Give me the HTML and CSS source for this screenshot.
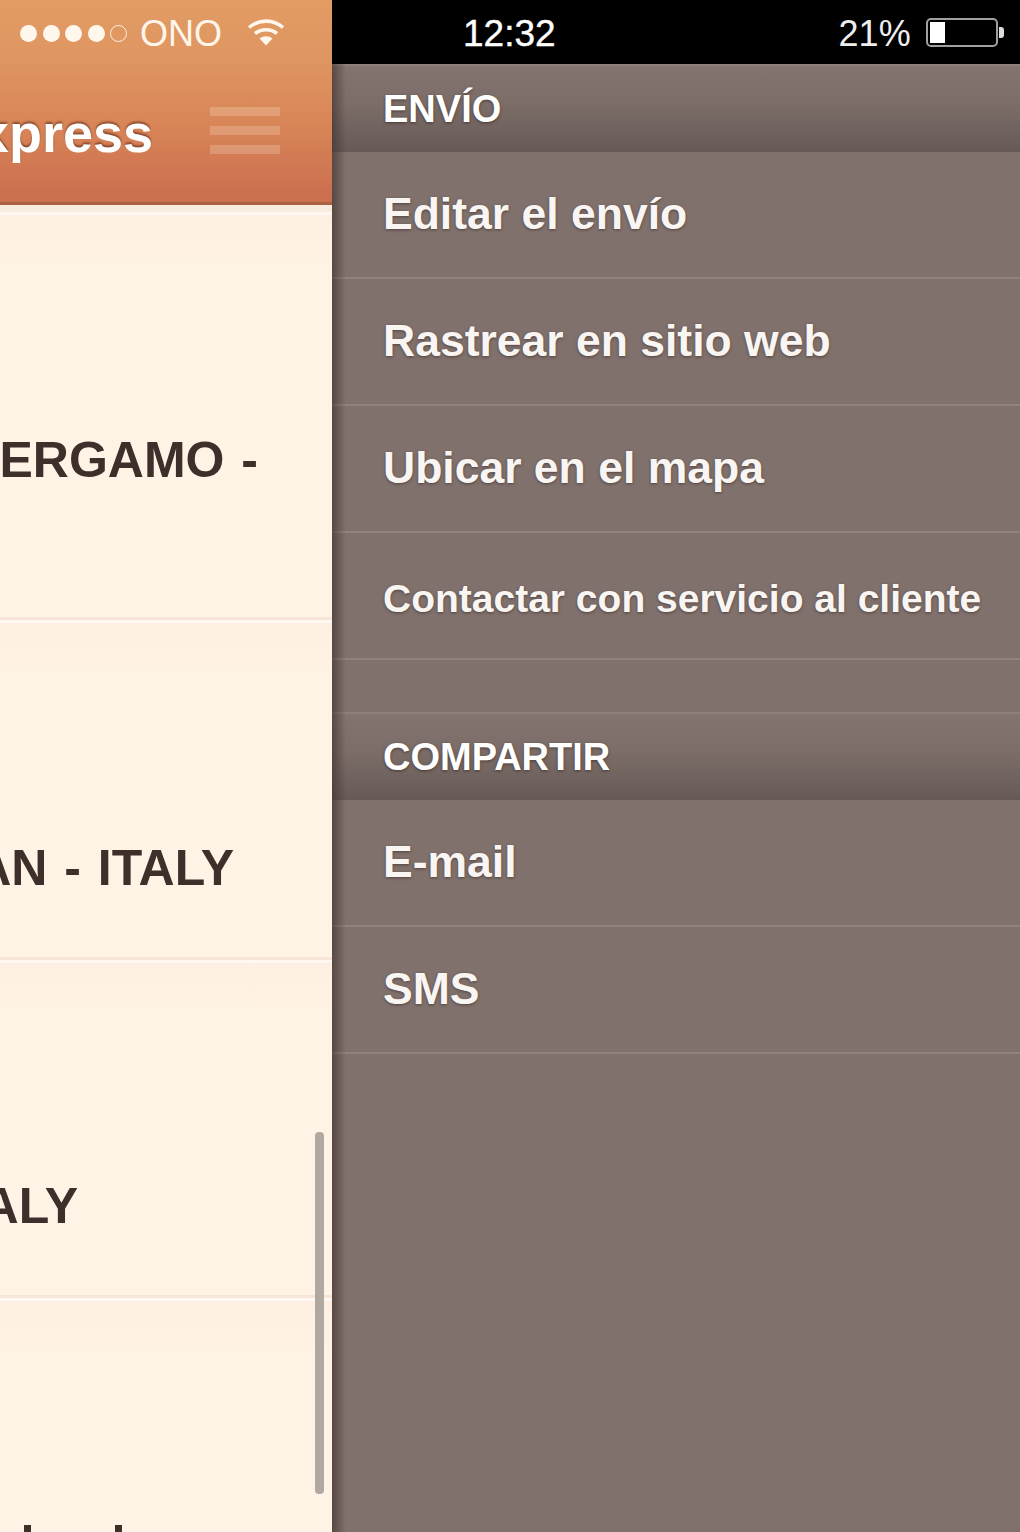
FILE: index.html
```html
<!DOCTYPE html>
<html lang="es">
<head>
  <title>Envío</title>
  <meta charset="UTF-8" />
  <meta name="viewport" content="width=device-width" />
  <link rel="stylesheet" href="styles.css">
</head>
<body>
  <main class="screen">
    <section class="left-panel">
      <header class="app-header">
        <div class="carrier-bar">
          <span class="signal">
            <i class="dot"></i><i class="dot"></i><i class="dot"></i><i class="dot"></i><i class="dot empty"></i>
          </span>
          <span class="carrier">ONO</span>
          <svg class="wifi" width="38" height="28" viewBox="0 0 38 28">
            <path d="M2 9.5C12 1 26 1 36 9.5" fill="none" stroke="#fff6ec" stroke-width="3.6" />
            <path d="M8 15.5C14.500 10.500 23.500 10.500 30 15.500" fill="none" stroke="#fff6ec" stroke-width="3.6" />
            <path d="M12.500 20.500L19 27.500L25.500 20.500C21.500 17.500 16.500 17.500 12.500 20.500Z" fill="#fff6ec" />
          </svg>
        </div>
        <div class="title-bar">
          <h1 class="app-title">Express</h1>
          <div class="menu-button"><i></i><i></i><i></i></div>
        </div>
      </header>
      <ul class="shipments">
        <li class="shipment first"><span>BERGAMO -</span></li>
        <li class="shipment short"><span>MILAN - ITALY</span></li>
        <li class="shipment short alt"><span>ITALY</span></li>
        <li class="shipment last"><i class="stem"></i><i class="stem"></i></li>
      </ul>
      <div class="scrollbar"></div>
    </section>

    <section class="right-panel">
      <div class="black-bar">
        <span class="clock">12:32</span>
        <span class="battery-text">21%</span>
        <span class="battery"><i class="battery-level"></i></span>
      </div>
      <nav class="menu">
        <h2 class="menu-head">ENVÍO</h2>
        <a class="menu-item">Editar el envío</a>
        <a class="menu-item">Rastrear en sitio web</a>
        <a class="menu-item">Ubicar en el mapa</a>
        <a class="menu-item small">Contactar con servicio al cliente</a>
        <div class="menu-gap"></div>
        <h2 class="menu-head">COMPARTIR</h2>
        <a class="menu-item">E-mail</a>
        <a class="menu-item">SMS</a>
      </nav>
      <div class="panel-shadow"></div>
    </section>
  </main>
</body>
</html>
```

FILE: styles.css
```css
* {
  box-sizing: border-box;
}

html,
body {
  margin: 0;
  height: 100%;
}

body {
  font-family: "Liberation Sans", Arial, sans-serif;
  background-color: #80716d;
  overflow: hidden;
}

.screen {
  display: grid;
  grid-template-columns: 332px 688px;
  width: 1020px;
  height: 1532px;
  overflow: hidden;
}

/* left side, the list that got pushed away */
.left-panel {
  position: relative;
  height: 1532px;
  overflow: hidden;
  background-color: #fff3e6;
}

.app-header {
  height: 205px;
  background: linear-gradient(#e29c64, #df9560 30%, #d98658 60%, #cb6f4f 97%);
  border-bottom: 3px solid #ab6243;
}

.carrier-bar {
  display: flex;
  align-items: center;
  height: 64px;
  padding-left: 20px;
  padding-top: 3px;
  color: #fff6ec;
}

.signal {
  display: flex;
  gap: 5.5px;
}

.dot {
  display: block;
  width: 17px;
  height: 17px;
  border-radius: 50%;
  background-color: #fff6ec;
}

.dot.empty {
  background: none;
  border: 1.500px solid #fff0e0;
}

.carrier {
  margin-left: 13px;
  font-size: 36px;
}

.wifi {
  margin-left: 25px;
  margin-top: -3px;
}

.title-bar {
  display: flex;
  align-items: center;
  justify-content: flex-end;
  height: 138px;
  padding-right: 52px;
}

.app-title {
  margin: 0 57px 0 0;
  font-size: 54px;
  font-weight: bold;
  color: #fff;
  white-space: nowrap;
  text-shadow: 0 -2px 2px rgba(90, 40, 20, 0.6);
}

.menu-button {
  display: flex;
  flex-direction: column;
  gap: 10px;
  flex: none;
  width: 70px;
  margin-top: -5px;
}

.menu-button i {
  display: block;
  height: 9px;
  background-color: rgba(255, 240, 225, 0.22);
}

.shipments {
  margin: 0;
  padding: 0;
  list-style: none;
  border-top: 7px solid #f8ecdf;
}

.shipment {
  display: flex;
  justify-content: flex-end;
  padding-top: 216px;
  font-size: 50px;
  font-weight: bold;
  line-height: 58px;
  word-spacing: 3px;
  color: #3f2f2a;
  white-space: nowrap;
  background: linear-gradient(#feefe2, #fff3e6 50px);
  border-bottom: 3px solid #f7e6d8;
  border-top: 3px solid #fff8f2;
}

.shipment.first {
  height: 408px;
  padding-right: 74px;
}

.shipment.short {
  height: 340px;
  padding-right: 98px;
}

.shipment.alt {
  height: 338px;
  padding-top: 214px;
  padding-right: 254px;
}

.shipment.last {
  gap: 84px;
  justify-content: flex-start;
  height: 240px;
  padding: 224px 0 0 24px;
  border-bottom: 0;
}

.stem {
  display: block;
  width: 7px;
  height: 10px;
  background-color: #40302b;
}

.scrollbar {
  position: absolute;
  left: 315px;
  top: 1132px;
  width: 9px;
  height: 362px;
  border-radius: 4px;
  background-color: #b1a99f;
}

/* right side, the slide menu */
.right-panel {
  position: relative;
  height: 1532px;
  overflow: hidden;
  background-color: #80716d;
}

.black-bar {
  display: flex;
  align-items: center;
  height: 64px;
  padding-left: 131px;
  background-color: #000;
  color: #fff;
}

.clock {
  margin-top: 3px;
  font-size: 37px;
  -webkit-text-stroke: 0.4px #fff;
}

.battery-text {
  margin-top: 3px;
  margin-left: 283px;
  font-size: 36px;
  color: #eee;
}

.battery {
  position: relative;
  display: block;
  width: 72px;
  height: 29px;
  margin-left: 15px;
  margin-top: 1px;
  padding: 2px;
  border: 2px solid #a0a0a0;
  border-radius: 5px;
}

.battery::after {
  content: "";
  position: absolute;
  right: -8px;
  top: 7px;
  width: 5px;
  height: 11px;
  border-radius: 0 3px 3px 0;
  background-color: #ddd;
}

.battery-level {
  display: block;
  width: 15px;
  height: 100%;
  background-color: #fff;
}

.menu {
  display: flex;
  flex-direction: column;
}

.menu-head {
  display: flex;
  align-items: center;
  height: 88px;
  margin: 0;
  padding-left: 51px;
  font-size: 38px;
  font-weight: bold;
  color: #fff;
  background: linear-gradient(#84736f, #7d6e69 40%, #675a56);
  border-top: 2px solid #90807b;
  text-shadow: 0 1px 3px rgba(50, 35, 30, 0.7);
}

.menu-item {
  display: flex;
  align-items: center;
  height: 127px;
  padding-left: 51px;
  padding-bottom: 2px;
  font-size: 44.5px;
  font-weight: bold;
  color: #f8f5f2;
  border-bottom: 2px solid #90827d;
  text-shadow: 0 1px 3px rgba(50, 35, 30, 0.6);
}

.menu-item.small {
  padding-top: 6px;
  padding-bottom: 0;
  font-size: 39px;
}

.menu-gap {
  height: 52px;
}

.panel-shadow {
  position: absolute;
  left: 0;
  top: 64px;
  bottom: 0;
  width: 14px;
  background: linear-gradient(to right, rgba(60, 45, 40, 0.6), rgba(60, 45, 40, 0));
}
```
